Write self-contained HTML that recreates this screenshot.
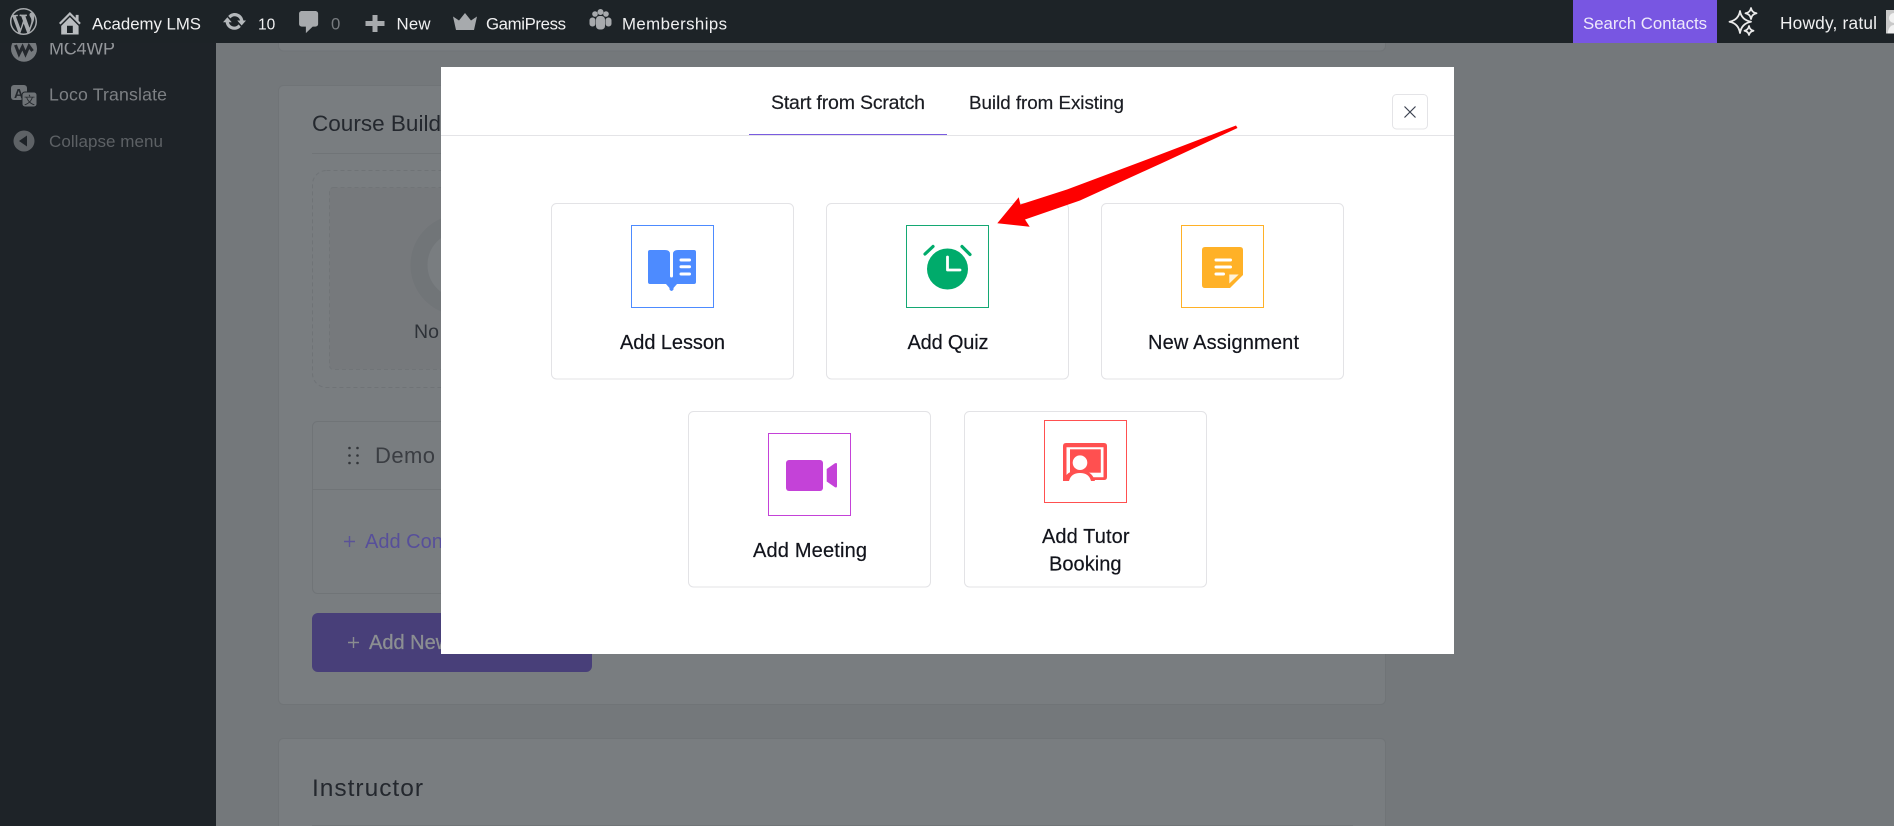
<!DOCTYPE html>
<html lang="en">
<head>
<meta charset="utf-8">
<title>Course Builder</title>
<style>
html,body{margin:0;padding:0;width:1894px;height:826px;overflow:hidden;background:#74787b}
svg{display:block;position:absolute;left:0;top:0}
text{font-family:"Liberation Sans",Arial,sans-serif;white-space:pre}
</style>
</head>
<body>
<svg width="1894" height="826" viewBox="0 0 1894 826" xmlns="http://www.w3.org/2000/svg">
  <!-- page background -->
  <rect width="1894" height="826" fill="#74787b"/>
  <!-- top card remnant -->
  <rect x="278.500" y="0" width="1107" height="51" rx="5" fill="#797d80" stroke="#707477"/>
  <!-- course builder card -->
  <rect x="278.500" y="85.500" width="1107" height="619" rx="5" fill="#797d80" stroke="#707477"/>
  <text x="312" y="131" font-size="22.500" fill="#24282e" textLength="129" lengthAdjust="spacing">Course Build</text>
  <line x1="312" y1="153.500" x2="1353" y2="153.500" stroke="#707477"/>
  <rect x="312.500" y="170.500" width="1040" height="217" rx="14" fill="none" stroke="#6f7376" stroke-dasharray="4 3"/>
  <rect x="329.500" y="187.500" width="1006" height="182" rx="4" fill="#76797c" stroke="#707477" stroke-dasharray="4 3"/>
  <circle cx="461" cy="265" r="42" fill="#797d80" stroke="#717578" stroke-width="17"/>
  <text x="414" y="338" font-size="19.500" fill="#2e3238">No</text>
  <!-- demo topic -->
  <rect x="312.500" y="421.500" width="1040" height="172" rx="5" fill="none" stroke="#707477"/>
  <line x1="312" y1="489.500" x2="1352" y2="489.500" stroke="#707477"/>
  <g fill="#33363a">
    <circle cx="349.500" cy="448" r="1.300"/><circle cx="357.500" cy="448" r="1.300"/>
    <circle cx="349.500" cy="455.500" r="1.300"/><circle cx="357.500" cy="455.500" r="1.300"/>
    <circle cx="349.500" cy="463" r="1.300"/><circle cx="357.500" cy="463" r="1.300"/>
  </g>
  <text x="375" y="463" font-size="22" fill="#3a3d42" textLength="60" lengthAdjust="spacing">Demo</text>
  <path d="M344 541.500H355M349.500 536V547" stroke="#5a5298" stroke-width="1.400" fill="none"/>
  <text x="365" y="548" font-size="20" fill="#574f9a">Add Con</text>
  <rect x="312" y="613" width="280" height="59" rx="6" fill="#483f79"/>
  <path d="M348 642.500H359M353.500 637V648" stroke="#8a8d90" stroke-width="1.400" fill="none"/>
  <text x="369" y="649" font-size="20" fill="#8c8f92" stroke="#8c8f92" stroke-width=".3">Add New</text>
  <!-- instructor card -->
  <rect x="278.500" y="738.500" width="1107" height="120" rx="5" fill="#797d80" stroke="#707477"/>
  <text x="312" y="796" font-size="24.500" fill="#24282e" textLength="111" lengthAdjust="spacing">Instructor</text>
  <line x1="312" y1="825.500" x2="1353" y2="825.500" stroke="#707477"/>

  <!-- modal -->
  <rect x="441" y="67" width="1013" height="587" fill="#ffffff"/>
  <line x1="441" y1="135.500" x2="1454" y2="135.500" stroke="#e4e4e7"/>
  <line x1="749" y1="134.500" x2="947" y2="134.500" stroke="#7a5ce0"/>
  <text x="771" y="109" font-size="19.500" fill="#1a1c22" stroke="#1a1c22" stroke-width=".2" textLength="154" lengthAdjust="spacing">Start from Scratch</text>
  <text x="969" y="109" font-size="18.800" fill="#1a1c22" stroke="#1a1c22" stroke-width=".2" textLength="155" lengthAdjust="spacing">Build from Existing</text>
  <rect x="1392.500" y="94.500" width="35" height="34.500" rx="4" fill="#fff" stroke="#e4e4e7"/>
  <path d="M1404.500 106.500L1415.500 117.500M1415.500 106.500L1404.500 117.500" stroke="#3c4250" stroke-width="1.200" fill="none"/>

  <!-- cards -->
  <g fill="#fff" stroke="#e3e3e6">
    <rect x="551.500" y="203.500" width="242" height="175.500" rx="5"/>
    <rect x="826.500" y="203.500" width="242" height="175.500" rx="5"/>
    <rect x="1101.500" y="203.500" width="242" height="175.500" rx="5"/>
    <rect x="688.500" y="411.500" width="242" height="175.500" rx="5"/>
    <rect x="964.500" y="411.500" width="242" height="175.500" rx="5"/>
  </g>
  <!-- icon frames -->
  <g fill="none">
    <rect x="631.500" y="225.500" width="82" height="82" stroke="#4d8bff"/>
    <rect x="906.500" y="225.500" width="82" height="82" stroke="#14a873"/>
    <rect x="1181.500" y="225.500" width="82" height="82" stroke="#ffb127"/>
    <rect x="768.500" y="433.500" width="82" height="82" stroke="#c442d8"/>
    <rect x="1044.500" y="420.500" width="82" height="82" stroke="#ff5050"/>
  </g>
  <!-- book -->
  <path d="M648 252Q648 250 650 250H665Q670 250 670 254V276Q670 277.500 671.500 277.500Q673 277.500 673 276V254Q673 250 678 250H694Q696 250 696 252V282Q696 284 694 284H677L673.500 288V289.500Q671.500 292.500 669.500 289.500V288L666 284H650Q648 284 648 282Z" fill="#4d8bff"/>
  <path d="M681 260H689.500M681 266.800H689.500M681 274H689.500" stroke="#fff" stroke-width="3" stroke-linecap="round" fill="none"/>
  <!-- clock -->
  <circle cx="947.500" cy="269" r="20.500" fill="#00ab6b"/>
  <path d="M925 254L933 246.500M970 254.500L962 246.500" stroke="#00ab6b" stroke-width="3.200" stroke-linecap="round" fill="none"/>
  <path d="M947.500 257V270H960" stroke="#fff" stroke-width="2.800" stroke-linecap="round" stroke-linejoin="round" fill="none"/>
  <!-- note -->
  <path d="M1205 247H1240Q1243 247 1243 250V275L1230 288H1205Q1202 288 1202 285V250Q1202 247 1205 247Z" fill="#ffb127"/>
  <path d="M1216 260H1230.500M1216 267H1230.500M1216 274H1223.500" stroke="#fff" stroke-width="3" stroke-linecap="round" fill="none"/>
  <path d="M1229.300 274.500H1238.700L1229.300 283.500Z" fill="#fff2d9"/>
  <!-- video -->
  <rect x="786" y="460" width="37" height="31" rx="3" fill="#c442d8"/>
  <path d="M826.700 469V481.500L835 487.300Q837 488 837 486V464Q837 462.500 835 463.300Z" fill="#c442d8"/>
  <!-- booking -->
  <path d="M1066 443H1104Q1107 443 1107 446V477Q1107 480 1104 480H1066Q1063 480 1063 477V446Q1063 443 1066 443Z" fill="#ff5050"/>
  <path d="M1066.500 447.300H1103.500V477.300H1066.500Z" fill="#fff"/>
  <rect x="1070" y="449.300" width="30.800" height="23.400" fill="#ff5050"/>
  <path d="M1063 481V475H1066.500Q1070 470.500 1080 470.500Q1090 470.500 1093.500 477.500L1095 481Z" fill="#ff5050"/>
  <circle cx="1080" cy="462.700" r="7.300" fill="#fff"/>
  <path d="M1069 481Q1071 473 1080 473Q1089 473 1091 481Z" fill="#fff"/>
  <!-- labels -->
  <g font-size="20" fill="#12141c" stroke="#12141c" stroke-width=".2">
    <text x="620" y="349" textLength="105" lengthAdjust="spacing">Add Lesson</text>
    <text x="907.500" y="349" textLength="81" lengthAdjust="spacing">Add Quiz</text>
    <text x="1148" y="349" textLength="151" lengthAdjust="spacing">New Assignment</text>
    <text x="753" y="557" textLength="114" lengthAdjust="spacing">Add Meeting</text>
    <text x="1042" y="543" textLength="87.500" lengthAdjust="spacing">Add Tutor</text>
    <text x="1049" y="570.500" textLength="72.500" lengthAdjust="spacing">Booking</text>
  </g>
  <!-- arrow -->
  <path d="M1236 125.500L1237.500 128L1167.600 160.500L1080 200.500L1025 219.500L1029.700 226.700L997.300 223.300L1018.700 197.300L1020.400 204.500L1067 189.500L1147 159.500Z" fill="#fe0000"/>

  <!-- sidebar -->
  <rect x="0" y="0" width="216" height="826" fill="#1e2328"/>
  <circle cx="24" cy="48.700" r="13" fill="#75797d"/>
  <path d="M15.500 45L19 54L22.500 47L25.500 54L29 46L32.500 51" stroke="#24282d" stroke-width="3" fill="none"/>
  <text x="49" y="54.500" font-size="18" fill="#94979b" textLength="66" lengthAdjust="spacing">MC4WP</text>
  <rect x="11" y="85" width="16" height="15" rx="3" fill="#6f7377"/>
  <text x="14" y="98" font-size="13" font-weight="700" fill="#24282d">A</text>
  <rect x="22" y="92" width="15" height="15" rx="3" fill="#6f7377" stroke="#1e2328"/>
  <text x="24" y="104" font-size="11" fill="#24282d" style="font-family:'Noto Sans CJK SC',sans-serif">文</text>
  <text x="49" y="100.500" font-size="17.700" fill="#7d8084" textLength="118" lengthAdjust="spacing">Loco Translate</text>
  <circle cx="24" cy="141" r="10.500" fill="#5e6266"/>
  <path d="M19 141L27 135.500V146.500Z" fill="#1e2328"/>
  <text x="49" y="147" font-size="17" fill="#5d6165" textLength="114" lengthAdjust="spacing">Collapse menu</text>

  <!-- admin bar -->
  <rect x="0" y="0" width="1894" height="43" fill="#1d2327"/>
  <path transform="translate(10 8) scale(1.35)" fill="#a7aaad" d="M20 10c0-5.510-4.490-10-10-10C4.480 0 0 4.490 0 10c0 5.520 4.480 10 10 10 5.510 0 10-4.480 10-10zM7.780 15.370L4.370 6.220c.55-.02 1.170-.08 1.170-.08.5-.06.44-1.130-.06-1.110 0 0-1.450.11-2.370.11-.18 0-.37 0-.58-.01C4.120 2.690 6.870 1.110 10 1.110c2.330 0 4.450.87 6.050 2.340-.68-.11-1.650.39-1.650 1.580 0 .74.45 1.360.9 2.100.35.61.55 1.360.55 2.460 0 1.490-1.400 5-1.400 5l-3.030-8.370c.54-.02.82-.17.82-.17.5-.05.44-1.250-.06-1.220 0 0-1.440.12-2.380.12-.87 0-2.330-.12-2.330-.12-.5-.03-.56 1.200-.06 1.220l.92.08 1.260 3.410zM17.410 10c.24-.64.74-1.870.43-4.250.7 1.290 1.050 2.710 1.050 4.250 0 3.290-1.730 6.240-4.400 7.780.97-2.590 1.940-5.200 2.920-7.780zM6.100 18.090C3.120 16.650 1.110 13.530 1.110 10c0-1.300.23-2.480.72-3.590C3.250 10.300 4.670 14.200 6.100 18.090zm4.030-6.630l2.580 6.980c-.86.29-1.760.45-2.710.45-.79 0-1.570-.11-2.290-.33.81-2.380 1.620-4.740 2.420-7.100z"/>
  <path transform="translate(55.400 8.400) scale(1.45)" fill="#b9bcbf" d="M16 8.500l1.530 1.530-1.060 1.060L10 4.620l-6.470 6.470-1.060-1.060L10 2.500l4 4v-2h2v4zm-6-2.460l6 5.990V18H4v-5.970zM12 17v-5H8v5h4z"/>
  <path transform="translate(222 8.900) scale(1.25)" fill="#b4b8bb" d="M10.200 3.280c3.530 0 6.430 2.610 6.920 6h2.080l-3.500 4-3.500-4h2.320c-.45-1.970-2.210-3.450-4.320-3.450-1.450 0-2.730.71-3.540 1.780L4.950 5.660C6.230 4.200 8.110 3.280 10.200 3.280zm-.4 13.440c-3.520 0-6.430-2.610-6.920-6H.8l3.500-4c1.170 1.330 2.330 2.670 3.500 4H5.480c.45 1.970 2.210 3.450 4.320 3.450 1.450 0 2.730-.71 3.540-1.780l1.710 1.950c-1.280 1.460-3.150 2.380-5.250 2.380z"/>
  <path transform="translate(295 8.400) scale(1.36 1.3)" fill="#a7aaad" d="M5 2h10c1.100 0 2 .9 2 2v8c0 1.100-.9 2-2 2h-2l-5 5v-5H5c-1.100 0-2-.9-2-2V4c0-1.100.9-2 2-2z"/>
  <path d="M372.500 15H377.500V21H384.500V26H377.500V32H372.500V26H365.500V21H372.500Z" fill="#a7aaad"/>
  <path d="M453 16.500L459 20.500L465 13L471 20.500L477 16.500L474 30H456Z" fill="#a7aaad"/>
  <g fill="#a7aaad">
    <circle cx="595" cy="14" r="2.800"/><circle cx="600.500" cy="12" r="3"/><circle cx="606" cy="14" r="2.800"/>
    <rect x="589.500" y="17.500" width="6" height="9" rx="2.800"/>
    <rect x="596" y="16" width="9" height="13.500" rx="3.500"/>
    <rect x="605.500" y="17.500" width="6" height="9" rx="2.800"/>
  </g>
  <g font-size="16.800" fill="#f0f0f1">
    <text x="92" y="29.500" textLength="109" lengthAdjust="spacing">Academy LMS</text>
    <text x="258" y="29.500" font-size="15.500">10</text>
    <text x="331" y="29.500" fill="#777b7f" textLength="9" lengthAdjust="spacing">0</text>
    <text x="396.500" y="29.500" textLength="34" lengthAdjust="spacing">New</text>
    <text x="486" y="29.500" textLength="80" lengthAdjust="spacing">GamiPress</text>
    <text x="622" y="29.500" textLength="105" lengthAdjust="spacing">Memberships</text>
  </g>
  <rect x="1573" y="0" width="144" height="43" fill="#7856e2"/>
  <text x="1583" y="29" font-size="16.800" fill="#eee9fb" textLength="124" lengthAdjust="spacing">Search Contacts</text>
  <g fill="none" stroke="#eaeaea" stroke-width="1.800" stroke-linejoin="round">
    <path d="M1740 11Q1741.500 20 1751 21.700Q1741.500 23.500 1740 33Q1738.500 23.500 1729.500 21.700Q1738.500 20 1740 11Z"/>
    <path d="M1751 8Q1751.800 12.500 1756.500 13.300Q1751.800 14.200 1751 19Q1750.200 14.200 1745.500 13.300Q1750.200 12.500 1751 8Z"/>
    <path d="M1749 26Q1749.700 30 1753.500 30.700Q1749.700 31.500 1749 35Q1748.300 31.500 1744.500 30.700Q1748.300 30 1749 26Z"/>
  </g>
  <text x="1780" y="29" font-size="17.300" fill="#f0f0f1" textLength="97" lengthAdjust="spacing">Howdy, ratul</text>
  <rect x="1886" y="10" width="8" height="23.500" fill="#c9c9c9"/>
  <circle cx="1894" cy="18" r="5" fill="#f1f1f1"/>
  <path d="M1887.500 33.500Q1889 25 1894 25V33.500Z" fill="#f1f1f1"/>
</svg>
</body>
</html>
